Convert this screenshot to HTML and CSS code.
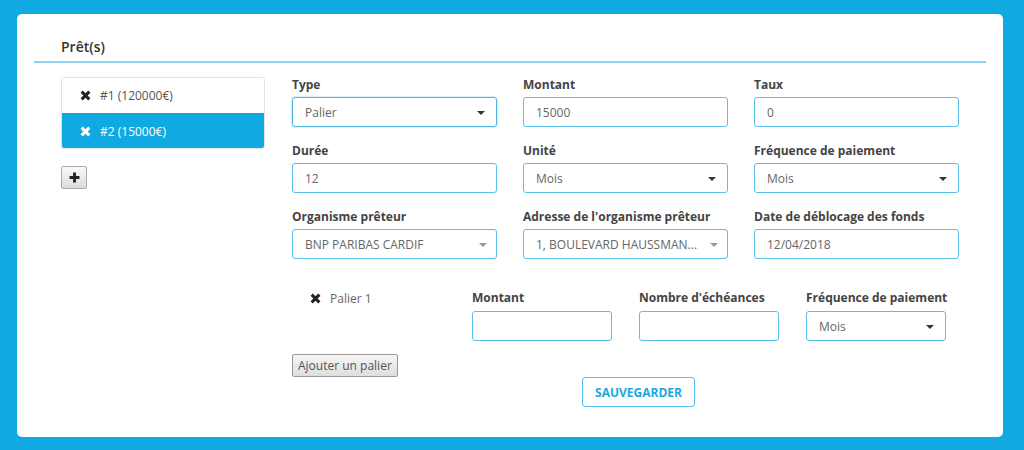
FILE: index.html
```html
<!DOCTYPE html>
<html lang="fr">
<head>
    <meta charset="UTF-8">
    <title>Prêts</title>
    <link rel="stylesheet" href="styles.css">
</head>
<body>
    <div class="card">
        <div class="card_title">Prêt(s)</div>
        <div class="card_body">
            <div class="loans">
                <ul class="loan_list">
                    <li>
                        <svg class="icon_x" viewBox="0 0 10 10"><path d="M1.5 1.5L8.5 8.5M8.5 1.5L1.5 8.5"/></svg>
                        <span>#1 (120000€)</span>
                    </li>
                    <li class="active">
                        <svg class="icon_x" viewBox="0 0 10 10"><path d="M1.5 1.5L8.5 8.5M8.5 1.5L1.5 8.5"/></svg>
                        <span>#2 (15000€)</span>
                    </li>
                </ul>
                <button class="btn_add">
                    <svg viewBox="0 0 10 10"><path d="M5 0.5V9.5M0.5 5H9.5"/></svg>
                </button>
            </div>

            <div class="loan_form">
                <div class="grid">
                    <div class="field">
                        <label>Type</label>
                        <div class="input select focus">Palier<i class="caret"></i></div>
                    </div>
                    <div class="field">
                        <label>Montant</label>
                        <div class="input">15000</div>
                    </div>
                    <div class="field">
                        <label>Taux</label>
                        <div class="input">0</div>
                    </div>
                    <div class="field">
                        <label>Durée</label>
                        <div class="input">12</div>
                    </div>
                    <div class="field">
                        <label>Unité</label>
                        <div class="input select">Mois<i class="caret"></i></div>
                    </div>
                    <div class="field">
                        <label>Fréquence de paiement</label>
                        <div class="input select">Mois<i class="caret"></i></div>
                    </div>
                    <div class="field">
                        <label>Organisme prêteur</label>
                        <div class="input select light">BNP PARIBAS CARDIF<i class="caret"></i></div>
                    </div>
                    <div class="field">
                        <label>Adresse de l'organisme prêteur</label>
                        <div class="input select light">1, BOULEVARD HAUSSMAN...<i class="caret"></i></div>
                    </div>
                    <div class="field">
                        <label>Date de déblocage des fonds</label>
                        <div class="input">12/04/2018</div>
                    </div>
                </div>

                <div class="palier">
                    <div class="palier_name">
                        <svg class="icon_x" viewBox="0 0 10 10"><path d="M1.5 1.5L8.5 8.5M8.5 1.5L1.5 8.5"/></svg>
                        <span>Palier 1</span>
                    </div>
                    <div class="field small">
                        <label>Montant</label>
                        <div class="input"></div>
                    </div>
                    <div class="field small">
                        <label>Nombre d'échéances</label>
                        <div class="input"></div>
                    </div>
                    <div class="field small">
                        <label>Fréquence de paiement</label>
                        <div class="input select">Mois<i class="caret"></i></div>
                    </div>
                </div>

                <button class="btn_palier">Ajouter un palier</button>
                <div class="actions">
                    <button class="btn_save">SAUVEGARDER</button>
                </div>
            </div>
        </div>
    </div>
</body>
</html>
```

FILE: styles.css
```css
*{
    padding: 0;
    margin: 0;
    box-sizing: border-box;
}

body{
    background-color: #11a9e2;
    font-family: "Open Sans", "DejaVu Sans", sans-serif;
    font-size: 12px;
    color: #444;
}

.card{
    margin: 14px 21px 0 17px;
    height: 423px;
    padding: 0 17px;
    background-color: #fff;
    border-radius: 5px;
}

.card_title{
    padding: 23px 0 5px 27px;
    font-size: 14px;
    font-weight: 600;
    color: #333;
    line-height: 19px;
    border-bottom: 2px solid #8dd4f2;
}

.card_body{
    display: flex;
    padding-left: 27px;
    gap: 27px;
}

.loans{
    width: 204px;
    padding-top: 14px;
}

.loan_list{
    list-style: none;
    border: 1px solid #e3e3e3;
    border-radius: 3px;
    overflow: hidden;
}

.loan_list li{
    display: flex;
    align-items: center;
    height: 35px;
    padding-left: 18px;
    color: #555;
}

.loan_list li + li{
    border-top: 1px solid #e3e3e3;
}

.loan_list li.active{
    background-color: #11a9e2;
    color: #fff;
    border-top-color: #11a9e2;
}

.icon_x{
    width: 11px;
    height: 11px;
    margin-right: 9px;
    fill: none;
    stroke: #222;
    stroke-width: 2.8;
}

.active .icon_x{
    stroke: #fff;
}

.btn_add{
    display: flex;
    align-items: center;
    justify-content: center;
    margin-top: 17px;
    width: 26px;
    height: 23px;
    border: 1px solid #aaa;
    border-radius: 2px;
    background: linear-gradient(#fafafa, #dcdcdc);
}

.btn_add svg{
    width: 11px;
    height: 11px;
    fill: none;
    stroke: #222;
    stroke-width: 2.6;
}

.loan_form{
    padding-top: 14px;
    width: 668px;
}

.grid{
    display: grid;
    grid-template-columns: repeat(3, 205px);
    column-gap: 26px;
    row-gap: 16px;
}

.field label{
    display: block;
    font-weight: 700;
    line-height: 16px;
    margin-bottom: 4px;
    color: #444;
    white-space: nowrap;
}

.input{
    position: relative;
    display: flex;
    align-items: center;
    height: 30px;
    padding: 0 28px 0 12px;
    border: 1px solid #58c0ec;
    border-radius: 3px;
    color: #666;
    white-space: nowrap;
}

.input.focus{
    border-color: #4fb3e0;
    box-shadow: 0 0 2px rgba(17, 169, 226, 0.6);
}

.caret{
    position: absolute;
    right: 11px;
    top: 13px;
    border-top: 4px solid #333;
    border-left: 4px solid transparent;
    border-right: 4px solid transparent;
}

.light .caret{
    border-top-color: #999;
    right: 9px;
}

.palier{
    display: flex;
    margin-top: 31px;
    gap: 27px;
}

.palier_name{
    display: flex;
    align-items: center;
    width: 153px;
    height: 16px;
    padding-left: 18px;
    color: #666;
}

.palier .field{
    width: 140px;
}

.palier .field label{
    margin-bottom: 5px;
}

.btn_palier{
    margin-top: 13px;
    height: 23px;
    padding: 0 5px;
    font-family: inherit;
    font-size: 12px;
    color: #555;
    border: 1px solid #999;
    border-radius: 2px;
    background: linear-gradient(#f6f6f6, #dedede);
}

.actions{
    padding-left: 290px;
}

.btn_save{
    width: 113px;
    height: 30px;
    font-family: inherit;
    font-size: 12px;
    font-weight: 700;
    color: #1ba7df;
    background-color: #fff;
    border: 1px solid #58c0ec;
    border-radius: 3px;
}
```
